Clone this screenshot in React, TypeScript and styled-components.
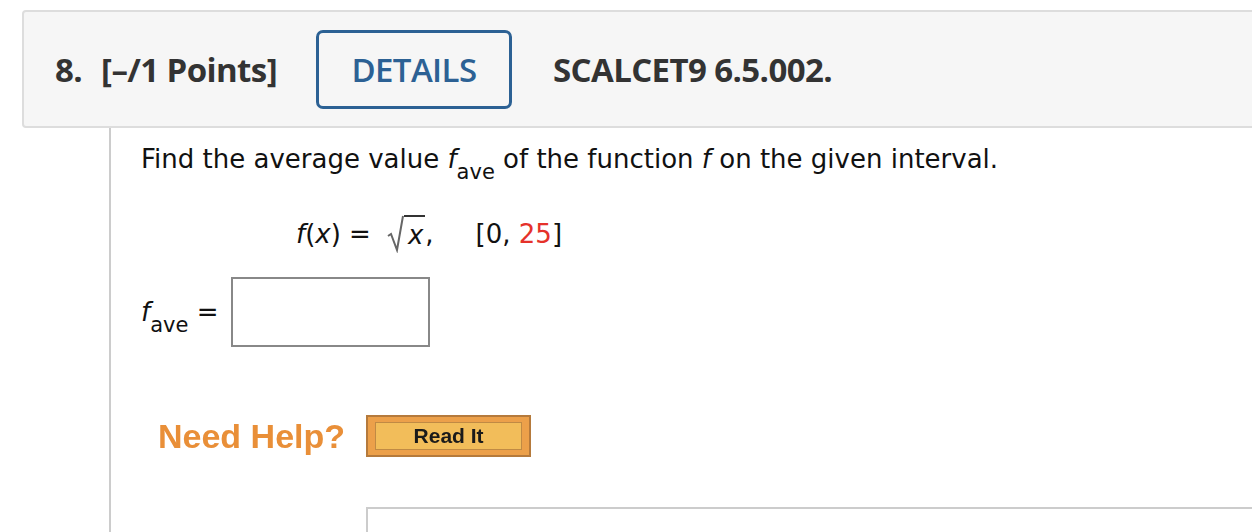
import React from "react";
import styled, { createGlobalStyle } from "styled-components";

const GlobalStyle = createGlobalStyle`
  html, body {
    margin: 0;
    padding: 0;
    background: #ffffff;
    overflow: hidden;
  }
  body {
    width: 1252px;
    height: 532px;
  }
`;

const Page = styled.div`
  display: flex;
  flex-direction: column;
  height: 532px;
  padding-top: 10px;
  box-sizing: border-box;
`;

const Header = styled.div`
  flex-shrink: 0;
  display: flex;
  align-items: center;
  height: 118px;
  margin-left: 22px;
  margin-right: -10px;
  padding-left: 31px;
  box-sizing: border-box;
  background: #f6f6f6;
  border: 2px solid #dddddd;
  border-radius: 4px;
  font-family: "Open Sans", "Liberation Sans", sans-serif;
  font-weight: 700;
  font-size: 33px;
  letter-spacing: -0.6px;
  color: #333333;
`;

const Number = styled.span`
  margin-right: 19px;
`;

const DetailsButton = styled.div`
  display: flex;
  align-items: center;
  justify-content: center;
  width: 196px;
  height: 79px;
  margin-left: 39px;
  box-sizing: border-box;
  border: 3px solid #2c6194;
  border-radius: 7px;
  color: #2c6194;
  font-weight: 600;
  font-size: 33px;
`;

const Source = styled.span`
  margin-left: 41px;
`;

const Body = styled.div`
  flex: 1;
  margin-left: 109px;
  padding-left: 30px;
  border-left: 2px solid #cccccc;
  font-family: "DejaVu Sans", Verdana, sans-serif;
  font-size: 26px;
  color: #111111;
`;

const Prompt = styled.p`
  margin: 16px 0 0;
  line-height: 30px;
`;

const Italic = styled.i`
  font-style: italic;
`;

const Sub = styled.sub`
  font-size: 21px;
  vertical-align: -11px;
  line-height: 0;
`;

const Formula = styled.div`
  display: flex;
  align-items: center;
  margin: 38px 0 0 155px;
  height: 44px;
  white-space: pre;
`;

const Radical = styled.span`
  display: inline-flex;
  align-items: flex-start;
  margin-left: 16px;
`;

const Radicand = styled.span`
  border-top: 2px solid #333333;
  padding: 3px 2px 0 4px;
  font-style: italic;
`;

const Interval = styled.span`
  margin-left: 42px;
`;

const Red = styled.span`
  color: #e5322a;
`;

const AnswerRow = styled.div`
  display: flex;
  align-items: center;
  margin-top: 21px;
`;

const AnswerLabel = styled.span`
  margin-right: 13px;
`;

const AnswerInput = styled.input`
  width: 199px;
  height: 70px;
  box-sizing: border-box;
  border: 2px solid #888888;
  outline: none;
  font-size: 22px;
`;

const HelpRow = styled.div`
  display: flex;
  align-items: center;
  margin: 68px 0 0 17px;
`;

const HelpText = styled.span`
  font-family: "Liberation Sans", Arial, sans-serif;
  font-weight: 700;
  font-size: 34px;
  color: #e98f38;
  filter: blur(0.5px);
`;

const ReadIt = styled.div`
  display: flex;
  margin-left: 21px;
  width: 165px;
  height: 42px;
  padding: 5px 7px;
  box-sizing: border-box;
  background: #eca04a;
  border: 2px solid #b57a3c;
`;

const ReadItInner = styled.div`
  flex: 1;
  display: flex;
  align-items: center;
  justify-content: center;
  background: #f2bd5a;
  border: 1px solid #c08a44;
  font-family: "Liberation Sans", Arial, sans-serif;
  font-weight: 700;
  font-size: 21px;
  color: #1a1a1a;
  filter: blur(0.4px);
`;

const NextBox = styled.div`
  margin: 50px 0 0 225px;
  height: 40px;
  border-top: 2px solid #cccccc;
  border-left: 2px solid #cccccc;
`;

export default function App() {
  return (
    <>
      <GlobalStyle />
      <Page>
        <Header>
          <Number>8.</Number>
          <span>[–/1 Points]</span>
          <DetailsButton>DETAILS</DetailsButton>
          <Source>SCALCET9 6.5.002.</Source>
        </Header>
        <Body>
          <Prompt>
            Find the average value <Italic>f</Italic>
            <Sub>ave</Sub> of the function <Italic>f</Italic> on the given
            interval.
          </Prompt>
          <Formula>
            <Italic>f</Italic>(<Italic>x</Italic>) =
            <Radical>
              <svg width="17" height="38" viewBox="0 0 17 38">
                <path
                  d="M1 21 L4 19 L10 35 L16 1"
                  fill="none"
                  stroke="#666666"
                  strokeWidth="2"
                />
              </svg>
              <Radicand>x</Radicand>
            </Radical>
            ,
            <Interval>
              [0, <Red>25</Red>]
            </Interval>
          </Formula>
          <AnswerRow>
            <AnswerLabel>
              <Italic>f</Italic>
              <Sub>ave</Sub> =
            </AnswerLabel>
            <AnswerInput type="text" />
          </AnswerRow>
          <HelpRow>
            <HelpText>Need Help?</HelpText>
            <ReadIt>
              <ReadItInner>Read It</ReadItInner>
            </ReadIt>
          </HelpRow>
          <NextBox />
        </Body>
      </Page>
    </>
  );
}
